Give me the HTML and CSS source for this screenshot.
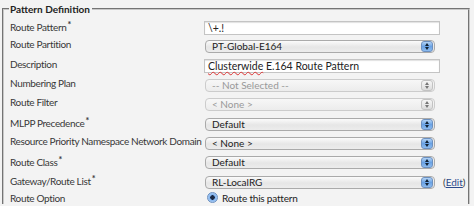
FILE: index.html
```html
<!DOCTYPE html>
<html lang="en">
  <head>
    <meta charset="UTF-8" />
    <title>Pattern Definition</title>
    <link rel="stylesheet" href="styles.css">
  </head>
  <body>
    <fieldset class="pattern">
      <legend>Pattern Definition</legend>
      <div class="row">
        <div class="label">Route Pattern<span class="req">*</span></div>
        <div class="text-input">\+.!</div>
      </div>
      <div class="row">
        <div class="label">Route Partition</div>
        <div class="select"><span>PT-Global-E164</span><i class="stepper"></i></div>
      </div>
      <div class="row">
        <div class="label">Description</div>
        <div class="text-input"><span class="typo">Clusterwide</span> E.164 Route Pattern</div>
      </div>
      <div class="row">
        <div class="label">Numbering Plan</div>
        <div class="select off"><span>-- Not Selected --</span><i class="stepper"></i></div>
      </div>
      <div class="row">
        <div class="label">Route Filter</div>
        <div class="select off"><span>&lt; None &gt;</span><i class="stepper"></i></div>
      </div>
      <div class="row">
        <div class="label">MLPP Precedence<span class="req">*</span></div>
        <div class="select"><span>Default</span><i class="stepper"></i></div>
      </div>
      <div class="row">
        <div class="label">Resource Priority Namespace Network Domain</div>
        <div class="select"><span>&lt; None &gt;</span><i class="stepper"></i></div>
      </div>
      <div class="row">
        <div class="label">Route Class<span class="req">*</span></div>
        <div class="select"><span>Default</span><i class="stepper"></i></div>
      </div>
      <div class="row">
        <div class="label">Gateway/Route List<span class="req">*</span></div>
        <div class="select"><span>RL-LocalRG</span><i class="stepper"></i></div>
        <div class="edit">(<a href="#">Edit</a>)</div>
      </div>
      <div class="row last">
        <div class="label">Route Option</div>
        <div class="radio"><i class="dot"></i>Route this pattern</div>
      </div>
    </fieldset>
  </body>
</html>
```

FILE: styles.css
```css
* {
  margin: 0;
  padding: 0;
  box-sizing: border-box;
}
body {
  background-color: #f3f3f3;
  font-family: "Lato", "DejaVu Sans", sans-serif;
  color: #333;
  height: 206px;
  overflow: hidden;
}
.pattern {
  margin: 2px 4px 0 2px;
  border: 2px groove #c8c8c8;
  border-bottom: none;
  padding: 2px 0 0 6px;
}
.pattern legend {
  font-size: 10px;
  font-weight: bold;
  line-height: 14px;
  color: #222;
  padding: 0 2px 0 1px;
  margin-left: -1px;
}
.row {
  display: grid;
  grid-template-columns: 194px 236px auto;
  align-items: center;
  height: 19.3px;
}
.row.last {
  height: 12px;
}
.label {
  font-size: 10px;
  letter-spacing: -0.35px;
  line-height: 12px;
  align-self: start;
  padding-top: 1px;
  white-space: nowrap;
  color: #383838;
}
.row.last .label {
  padding-top: 0;
}
.req {
  font-size: 9px;
  font-weight: bold;
  vertical-align: 3px;
  margin-left: 1px;
}
.text-input {
  height: 14px;
  background: #fff;
  border: 1px solid #c4c4c4;
  box-shadow: inset 0 1px 1px rgba(0, 0, 0, 0.12);
  font-size: 10.5px;
  line-height: 12px;
  padding-left: 3px;
  color: #222;
  white-space: nowrap;
}
.typo {
  text-decoration: underline wavy #d33;
  text-decoration-thickness: 1px;
}
.select {
  position: relative;
  width: 230px;
  height: 13px;
  margin-left: 1px;
  border: 1px solid #aaa;
  border-radius: 4px;
  background: linear-gradient(#fbfbfb, #e6e6e6 55%, #ececec);
  font-size: 10px;
  line-height: 11px;
  padding-left: 6px;
  color: #222;
  white-space: nowrap;
}
.select.off {
  border-color: #ccc;
  color: #999;
  background: linear-gradient(#f7f7f7, #ececec);
}
.stepper {
  position: absolute;
  right: 1px;
  top: 0;
  width: 12px;
  height: 11px;
  border-radius: 3px;
  background: linear-gradient(#b4d4f6, #6aa2e4 50%, #8dbcf0);
  border: 1px solid #6c90c0;
}
.stepper::before,
.stepper::after {
  content: "";
  position: absolute;
  left: 3px;
  border-left: 2px solid transparent;
  border-right: 2px solid transparent;
}
.stepper::before {
  top: 1px;
  border-bottom: 3px solid #123;
}
.stepper::after {
  bottom: 1px;
  border-top: 3px solid #123;
}
.select.off .stepper {
  background: linear-gradient(#f6f6f6, #dcdcdc);
  border-color: #c2c2c2;
}
.select.off .stepper::before {
  border-bottom-color: #777;
}
.select.off .stepper::after {
  border-top-color: #777;
}
.edit {
  font-size: 10px;
  padding-left: 3px;
  color: #333;
}
.edit a {
  color: #2b4a8c;
}
.radio {
  display: flex;
  align-items: center;
  font-size: 10px;
  letter-spacing: -0.2px;
  color: #222;
  padding-left: 3px;
}
.dot {
  width: 11px;
  height: 11px;
  border-radius: 50%;
  border: 1px solid #6c90c0;
  background: radial-gradient(circle, #1c2a44 0 2px, #7fb2ee 2.5px, #c6def8);
  margin-right: 4px;
}
```
